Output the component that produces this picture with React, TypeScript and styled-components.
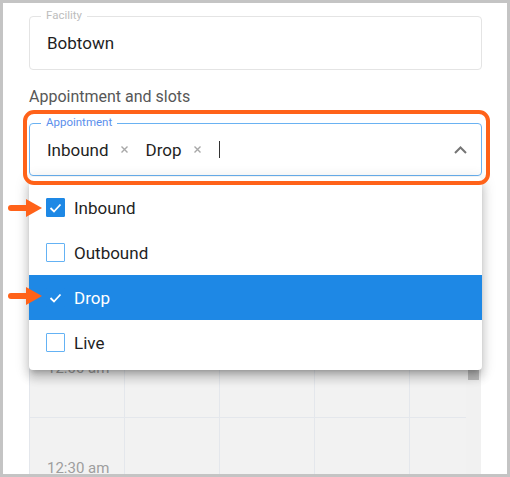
import React from "react";
import styled, { createGlobalStyle } from "styled-components";

const Global = createGlobalStyle`
  html, body { margin: 0; padding: 0; background: #fff; }
  * { box-sizing: border-box; }
`;

const ORANGE = "#ff6219";
const BLUE = "#1e88e5";
const LINE = "#e4e7ec";

const Frame = styled.div`
  position: relative;
  width: 510px;
  height: 477px;
  border: 3px solid #c4c4c4;
  background: #fff;
  padding: 13px 25px 0 26px;
  display: flex;
  flex-direction: column;
  overflow: hidden;
  font-family: Roboto, "Liberation Sans", Arial, sans-serif;
`;

const FieldBox = styled.div<{ $border: string; $h: number }>`
  position: relative;
  height: ${(p) => p.$h}px;
  border: 1px solid ${(p) => p.$border};
  border-radius: 4px;
  display: flex;
  align-items: center;
  padding: 0 14px 0 17px;
  background: #fff;
`;

const FloatLabel = styled.span<{ $color: string }>`
  position: absolute;
  top: -9px;
  left: 11px;
  padding: 0 5px;
  background: #fff;
  font-size: 11.5px;
  line-height: 14px;
  color: ${(p) => p.$color};
`;

const Value = styled.span`
  font-size: 17px;
  line-height: 20px;
  color: #1f1f1f;
`;

const SectionTitle = styled.div`
  margin-top: 17px;
  font-size: 16px;
  line-height: 20px;
  color: #575757;
`;

const SelectWrap = styled.div`
  position: relative;
  margin-top: 16px;
  z-index: 2;
`;

const Chip = styled.span`
  display: inline-flex;
  align-items: center;
  margin-right: 18px;
  &:last-of-type { margin-right: 10px; }
`;

const ChipRemove = styled.svg`
  margin-left: 12px;
  width: 7px;
  height: 7px;
`;

const Caret = styled.span`
  width: 1px;
  height: 17px;
  background: #333;
`;

const Chevron = styled.svg`
  margin-left: auto;
  width: 13px;
  height: 8px;
`;

const Ring = styled.div`
  position: absolute;
  top: -13px;
  left: -6px;
  right: -8px;
  bottom: -9px;
  border: 4px solid ${ORANGE};
  border-radius: 11px;
  pointer-events: none;
  z-index: 3;
`;

const Menu = styled.ul`
  position: absolute;
  top: calc(100% + 1px);
  left: 0;
  right: 0;
  margin: 0;
  padding: 8px 0 5px;
  list-style: none;
  background: #fff;
  border-radius: 4px;
  box-shadow: 0 5px 5px -3px rgba(0,0,0,0.2), 0 8px 10px 1px rgba(0,0,0,0.14), 0 3px 14px 2px rgba(0,0,0,0.12);
  z-index: 2;
`;

const MenuItem = styled.li<{ $active?: boolean }>`
  position: relative;
  height: 45px;
  display: flex;
  align-items: center;
  gap: 9px;
  padding-left: 17px;
  font-size: 17px;
  color: ${(p) => (p.$active ? "#fff" : "#1f1f1f")};
  background: ${(p) => (p.$active ? BLUE : "transparent")};
`;

const Box = styled.span<{ $checked?: boolean }>`
  width: 19px;
  height: 19px;
  border-radius: 1px;
  border: 1.5px solid ${(p) => (p.$checked ? BLUE : "#64b2f4")};
  background: ${(p) => (p.$checked ? BLUE : "#fff")};
  display: flex;
  align-items: center;
  justify-content: center;
`;

const Pointer = styled.svg<{ $dy: number }>`
  position: absolute;
  left: -23px;
  top: 50%;
  width: 38px;
  height: 20px;
  transform: translateY(calc(-50% + ${(p) => p.$dy}px));
`;

const Grid = styled.div`
  flex: 1;
  min-height: 0;
  margin-top: 42px;
  margin-right: 1px;
  display: flex;
  background: #f2f2f2;
  border-left: 1px solid ${LINE};
`;

const GridBody = styled.div`
  flex: 1;
  min-width: 0;
  overflow: hidden;
`;

const Row = styled.div`
  display: flex;
  height: 100px;
  border-bottom: 1px solid ${LINE};
`;

const TimeCell = styled.div`
  flex: 0 0 95px;
  border-right: 1px solid ${LINE};
  display: flex;
  align-items: center;
  padding-left: 17px;
  font-size: 15px;
  color: #9e9e9e;
`;

const SlotCell = styled.div`
  flex: 0 0 95px;
  border-right: 1px solid ${LINE};
`;

const ScrollTrack = styled.div`
  width: 15px;
  background: #f1f1f1;
  padding: 70px 2px 0;
`;

const ScrollThumb = styled.div`
  height: 92px;
  background: #bdbdbd;
`;

const Arrow = ({ dy }: { dy: number }) => (
  <Pointer $dy={dy} viewBox="0 0 38 20">
    <rect x="2" y="7" width="22" height="6" rx="3" fill={ORANGE} />
    <polygon points="20,1 36,10 20,19" fill={ORANGE} />
  </Pointer>
);

const Check = ({ color }: { color: string }) => (
  <svg width="13" height="10" viewBox="0 0 13 10">
    <polyline points="1.5,5 5,8.5 11.5,1.5" fill="none" stroke={color} strokeWidth="1.8" />
  </svg>
);

const items = [
  { label: "Inbound", checked: true, active: false, arrow: 0 as number | null },
  { label: "Outbound", checked: false, active: false, arrow: null },
  { label: "Drop", checked: true, active: true, arrow: -2 },
  { label: "Live", checked: false, active: false, arrow: null },
];

const rows = ["11:30 pm", "12:00 am", "12:30 am"];

export default function App() {
  return (
    <Frame>
      <Global />
      <FieldBox $border="#e4e4e4" $h={54}>
        <FloatLabel $color="#bdbdbd">Facility</FloatLabel>
        <Value>Bobtown</Value>
      </FieldBox>
      <SectionTitle>Appointment and slots</SectionTitle>
      <SelectWrap>
        <FieldBox $border="#6ab2f2" $h={53}>
          <FloatLabel $color="#5b8fec">Appointment</FloatLabel>
          {["Inbound", "Drop"].map((c) => (
            <Chip key={c}>
              <Value>{c}</Value>
              <ChipRemove viewBox="0 0 7 7">
                <path d="M0.5 0.5 L6.5 6.5 M6.5 0.5 L0.5 6.5" stroke="#a8a8a8" strokeWidth="1.4" />
              </ChipRemove>
            </Chip>
          ))}
          <Caret />
          <Chevron viewBox="0 0 13 8">
            <polyline points="1,7 6.5,1.5 12,7" fill="none" stroke="#757575" strokeWidth="2" />
          </Chevron>
        </FieldBox>
        <Ring />
        <Menu>
          {items.map((it) => (
            <MenuItem key={it.label} $active={it.active}>
              {it.arrow !== null && <Arrow dy={it.arrow} />}
              <Box $checked={it.checked}>{it.checked && <Check color="#fff" />}</Box>
              {it.label}
            </MenuItem>
          ))}
        </Menu>
      </SelectWrap>
      <Grid>
        <GridBody>
          {rows.map((r) => (
            <Row key={r}>
              <TimeCell>{r}</TimeCell>
              <SlotCell />
              <SlotCell />
              <SlotCell />
              <SlotCell />
            </Row>
          ))}
        </GridBody>
        <ScrollTrack>
          <ScrollThumb />
        </ScrollTrack>
      </Grid>
    </Frame>
  );
}
